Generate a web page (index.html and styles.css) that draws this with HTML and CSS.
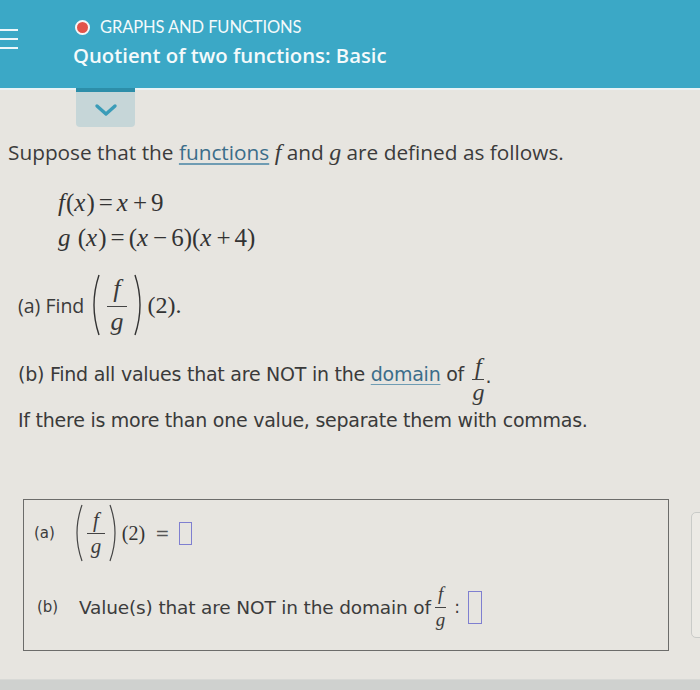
FILE: index.html
```html
<!DOCTYPE html>
<html>
<head>
<meta charset="utf-8">
<link rel="stylesheet" href="styles.css">
</head>
<body>
<header class="topbar">
  <div class="menu"><span></span><span></span><span></span></div>
  <div class="titles">
    <div class="topic"><span class="dot"></span>GRAPHS AND FUNCTIONS</div>
    <div class="title">Quotient of two functions: Basic</div>
  </div>
</header>
<div class="tabrow">
  <div class="tab">
    <svg width="24" height="14" viewBox="0 0 24 14"><path d="M3 3 L12 11 L21 3" fill="none" stroke="#3a9cb8" stroke-width="3.4" stroke-linecap="round" stroke-linejoin="round"/></svg>
  </div>
</div>
<main class="problem">
  <p class="intro">Suppose that the <span class="link">functions</span> <span class="mi">f</span> and <span class="mi">g</span> are defined as follows.</p>
  <div class="defs">
    <div class="eq"><span class="mi">f</span>(<span class="mi">x</span>)<span class="op">=</span><span class="mi">x</span><span class="op">+</span>9</div>
    <div class="eq"><span class="mi">g</span> (<span class="mi">x</span>)<span class="op">=</span>(<span class="mi">x</span><span class="op">−</span>6)(<span class="mi">x</span><span class="op">+</span>4)</div>
  </div>
  <div class="parta">
    <span class="lbl">(a) Find</span>
    <span class="bigfrac">
      <svg class="paren" width="13" height="64" viewBox="0 0 13 64"><path d="M11 2 Q1 32 11 62" fill="none" stroke="#333" stroke-width="1.4"/></svg>
      <span class="frac big"><span class="num mi">f</span><span class="den mi">g</span></span>
      <svg class="paren" width="13" height="64" viewBox="0 0 13 64"><path d="M2 2 Q12 32 2 62" fill="none" stroke="#333" stroke-width="1.4"/></svg>
    </span>
    <span class="serif">(2).</span>
  </div>
  <div class="partb">
    <div class="bline1"><span class="btxt">(b) Find all values that are NOT in the <span class="link">domain</span> of</span><span class="frac small"><span class="num mi">f</span><span class="den mi">g</span></span><span class="dotp">.</span></div>
    <div class="bline2">If there is more than one value, separate them with commas.</div>
  </div>
</main>
<section class="answer">
  <div class="arow rowa">
    <span class="albl">(a)</span>
    <span class="bigfrac mid">
      <svg class="paren" width="12" height="60" viewBox="0 0 12 60"><path d="M10 2 Q0 30 10 58" fill="none" stroke="#444" stroke-width="1.2"/></svg>
      <span class="frac tiny"><span class="num mi">f</span><span class="den mi">g</span></span>
      <svg class="paren" width="12" height="60" viewBox="0 0 12 60"><path d="M2 2 Q12 30 2 58" fill="none" stroke="#444" stroke-width="1.2"/></svg>
    </span>
    <span class="serif small2">(2)</span>
    <span class="eqsign">=</span>
    <span class="inbox"></span>
  </div>
  <div class="arow rowb">
    <span class="albl">(b)</span>
    <span class="btext">Value(s) that are NOT in the domain of</span>
    <span class="frac tiny2"><span class="num mi">f</span><span class="den mi">g</span></span>
    <span class="colon">:</span>
    <span class="inbox tall"></span>
  </div>
</section>
<div class="sidebtn"></div>
<div class="bottomstrip"></div>
</body>
</html>
```
FILE: styles.css
```css
html, body {
  margin: 0;
  padding: 0;
}
body {
  width: 700px;
  height: 690px;
  overflow: hidden;
  background: #e7e5e0;
  color: #3a3a3a;
  font-family: "Open Sans", "DejaVu Sans", sans-serif;
  position: relative;
}
.topbar {
  height: 90px;
  background: #3ba8c6;
  border-bottom: 2px solid #e9f3f5;
  display: flex;
  align-items: flex-start;
  box-sizing: border-box;
}
.menu {
  width: 18px;
  margin-top: 29px;
  display: flex;
  flex-direction: column;
  gap: 7px;
}
.menu span {
  display: block;
  height: 2px;
  background: #eef7fa;
}
.titles {
  margin-left: 55px;
  margin-top: 16px;
  color: #f4fafb;
  font-family: "Lato", "Open Sans", sans-serif;
}
.topic {
  display: flex;
  align-items: center;
  font-size: 16.5px;
  height: 22px;
  letter-spacing: -0.1px;
}
.dot {
  width: 11px;
  height: 11px;
  border-radius: 50%;
  background: #e2534a;
  border: 2px solid #f6f6f6;
  margin-left: 2px;
  margin-right: 10px;
}
.title {
  font-family: "Open Sans", sans-serif;
  font-weight: 600;
  font-size: 20.3px;
  margin-top: 3px;
  letter-spacing: 0;
}
.tabrow {
  padding-left: 76px;
  height: 37px;
}
.tab {
  width: 59px;
  height: 39px;
  background: #c6d6d8;
  border-radius: 0 0 4px 4px;
  border-top: 4px solid #2d8ea9;
  box-sizing: border-box;
  display: flex;
  align-items: center;
  justify-content: center;
  margin-top: -2px;
}
.tab svg { margin-top: 1px; }
.problem {
  padding-left: 8px;
}
.intro {
  margin: 14px 0 0 0;
  font-size: 20.8px;
  line-height: 26px;
  color: #3b3b3b;
}
.link {
  color: #3b6d8a;
  text-decoration: underline;
  text-decoration-color: #6f9cb3;
  text-underline-offset: 3px;
}
.mi {
  font-family: "Times New Roman", "Liberation Serif", serif;
  font-style: italic;
}
.intro .mi { font-size: 24px; }
.defs {
  margin: 20px 0 0 50px;
  font-family: "Times New Roman", "Liberation Serif", serif;
  font-size: 25px;
  line-height: 35px;
  color: #333;
}
.op { margin: 0 4px; }
.defs .mi { margin-right: 1px; }
.parta {
  display: flex;
  align-items: center;
  margin: 18px 0 0 10px;
  height: 64px;
}
.lbl {
  font-size: 19.5px;
  color: #3b3b3b;
  margin-right: 4px;
}
.bigfrac {
  display: inline-flex;
  align-items: center;
}
.frac {
  display: inline-flex;
  flex-direction: column;
  align-items: center;
  font-size: 22px;
  line-height: 24px;
  margin: 0 2px;
}
.frac .num {
  border-bottom: 1.4px solid #444;
  padding: 0 3px 2px;
}
.frac .den {
  padding-top: 1px;
}
.frac.big {
  font-size: 26px;
  line-height: 28px;
  margin: 0 6px;
}
.frac.big .num { padding: 0 6px 3px; }
.serif {
  font-family: "Times New Roman", "Liberation Serif", serif;
  font-size: 24px;
  color: #333;
  margin-left: 2px;
}
.partb {
  margin: 18px 0 0 10px;
  font-family: "DejaVu Sans", sans-serif;
  font-size: 19px;
  letter-spacing: -0.25px;
  color: #3a3a3a;
}
.bline1 {
  display: flex;
  align-items: flex-start;
  height: 58px;
  white-space: pre;
}
.btxt { margin-top: 8px; }
.bline1 .frac.small {
  font-size: 24px;
  line-height: 22px;
  margin-left: 8px;
  margin-right: 1px;
}
.dotp { margin-top: 10px; }
.bline2 {
  margin-top: -4px;
}
.answer {
  position: absolute;
  left: 23px;
  top: 499px;
  width: 646px;
  height: 152px;
  box-sizing: border-box;
  border: 1.5px solid #6c6c6a;
  font-family: "DejaVu Sans", sans-serif;
  color: #3c3c3c;
}
.arow {
  display: flex;
  align-items: center;
}
.rowa {
  margin: 2px 0 0 10px;
  height: 62px;
}
.albl {
  font-size: 15px;
  width: 38px;
}
.frac.tiny {
  font-size: 21px;
  line-height: 22px;
  margin: 0 3px;
}
.frac.tiny .num { padding: 0 6px 2px; }
.small2 { font-size: 20px; margin-left: 2px; }
.eqsign {
  font-size: 17px;
  margin: 0 10px 0 10px;
  color: #555;
}
.inbox {
  width: 13px;
  height: 23px;
  border: 1.5px solid #7f7fd0;
  display: inline-block;
  box-sizing: border-box;
}
.rowb {
  margin: 19px 0 0 13px;
}
.btext {
  font-size: 18.5px;
  letter-spacing: -0.15px;
  margin-left: 4px;
}
.frac.tiny2 {
  font-size: 19px;
  line-height: 22px;
  margin: 0 8px 0 4px;
}
.colon { font-size: 17px; margin-right: 8px; }
.inbox.tall { height: 33px; width: 14px; }
.sidebtn {
  position: absolute;
  left: 691px;
  top: 512px;
  width: 30px;
  height: 124px;
  border: 1.5px solid #c9cbc8;
  border-radius: 5px;
  background: #eceae5;
}
.bottomstrip {
  position: absolute;
  left: 0;
  right: 0;
  top: 679px;
  height: 11px;
  background: #cfd1cf;
  border-top: 1px solid #d8d9d6;
}
```
